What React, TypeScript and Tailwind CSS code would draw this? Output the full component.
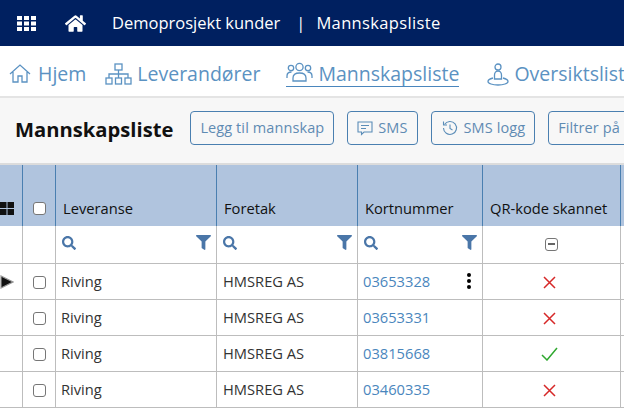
import { FaFilter, FaHome, FaSearch } from 'react-icons/fa';

const font = "font-['Open_Sans','Noto_Sans',sans-serif]";
const cols = 'grid grid-cols-[23px_33px_161px_141px_125px_138px_40px]';
const line = 'border-r border-b border-[#bdbdbd]';

const rows = [
  { no: '03653328', ok: false, active: true },
  { no: '03653331', ok: false },
  { no: '03815668', ok: true },
  { no: '03460335', ok: false },
];

function GridIcon() {
  return (
    <svg width="19" height="15" viewBox="0 0 19 15" fill="#fff">
      {[0, 7, 14].map(x => [0, 5.5, 11].map(y => <rect key={`${x}-${y}`} x={x} y={y} width="5" height="4" />))}
    </svg>
  );
}

function HomeOutline() {
  return (
    <svg width="22" height="22" viewBox="0 0 22 22" fill="none" stroke="#5b92c2" strokeWidth="1.3">
      <path d="M1 11 11 2l10 9M4 9v10h5v-6h4v6h5V9" />
    </svg>
  );
}

function OrgIcon() {
  return (
    <svg width="27" height="22" viewBox="0 0 27 22" fill="none" stroke="#5b92c2" strokeWidth="1.3">
      <rect x="10" y="1" width="7" height="6" />
      <rect x="1" y="15" width="6" height="6" />
      <rect x="10.5" y="15" width="6" height="6" />
      <rect x="20" y="15" width="6" height="6" />
      <path d="M13.5 7v8M4 15v-4h19v4" />
    </svg>
  );
}

function PeopleIcon() {
  return (
    <svg width="27" height="22" viewBox="0 0 27 22" fill="none" stroke="#5b92c2" strokeWidth="1.3">
      <circle cx="13.5" cy="5" r="3.6" />
      <circle cx="5" cy="6" r="2.7" />
      <circle cx="22" cy="6" r="2.7" />
      <path d="M7 19v-3c0-3 2.5-5 6.5-5s6.5 2 6.5 5v3zM1 16v-2c0-2 1.500-4 4.500-4M26 16v-2c0-2-1.500-4-4.500-4" />
    </svg>
  );
}

function PinPersonIcon() {
  return (
    <svg width="22" height="24" viewBox="0 0 22 24" fill="none" stroke="#5b92c2" strokeWidth="1.3">
      <circle cx="11" cy="5" r="3" />
      <path d="M7.500 17v-4c0-2 1.500-4 3.500-4s3.500 2 3.500 4v4z" />
      <path d="M6 16c-3 .8-5 2-5 3.500C1 21.500 5.500 23 11 23s10-1.500 10-3.500c0-1.500-2-2.700-5-3.500" />
    </svg>
  );
}

function SmsIcon() {
  return (
    <svg width="16" height="16" viewBox="0 0 16 16" fill="none" stroke="#5b8db8" strokeWidth="1.1">
      <path d="M1 2h14v10H7l-2.500 2.500V12H1z" />
      <path d="M4 5.500h8M4 8.500h5" />
    </svg>
  );
}

function HistoryIcon() {
  return (
    <svg width="18" height="16" viewBox="0 0 18 16" fill="none" stroke="#5b8db8" strokeWidth="1.1">
      <path d="M3.500 4.500A6.500 6.500 0 1 1 2.500 8" />
      <path d="M2.500 1.500v3.500H6M9 4.500V8.500l2.500 1.500" />
    </svg>
  );
}

function Tool({ children }: { children: React.ReactNode }) {
  return (
    <button className="h-[34px] shrink-0 flex items-center gap-[5px] px-[9px] rounded-[4px] border border-[#4a7fb0] text-[14.5px] tracking-[0.1px] text-[#5f8bb3] whitespace-nowrap">
      {children}
    </button>
  );
}

function NavItem({ icon, label, active, className }: { icon: React.ReactNode; label: string; active?: boolean; className?: string }) {
  return (
    <div className={`shrink-0 h-[27px] flex items-center ${active ? 'border-b border-[#4a86bd]' : ''} ${className ?? ''}`}>
      {icon}
      <span className="text-[19.5px] leading-none text-[#5b92c2] whitespace-nowrap pt-[1px]">{label}</span>
    </div>
  );
}

function HeadCell({ label }: { label?: string }) {
  return (
    <div className="h-[61px] border-r border-[#4a7fb0] flex items-end pb-[8px] pl-[7px] text-[14.7px] leading-[20px] text-[#111] whitespace-nowrap overflow-hidden">
      {label}
    </div>
  );
}

function FilterCell() {
  return (
    <div className={`h-[38px] ${line} flex items-center justify-between pl-[6px] pr-[5px] pb-[4px]`}>
      <FaSearch size={14} color="#4a76a8" />
      <FaFilter size={15} color="#4a76a8" />
    </div>
  );
}

function Box({ minus }: { minus?: boolean }) {
  return (
    <span className="w-[13px] h-[13px] rounded-[3px] border border-[#767676] bg-white flex items-center justify-center">
      {minus && <span className="w-[7px] h-[2px] bg-[#666]" />}
    </span>
  );
}

export default function App() {
  return (
    <div className={`w-[624px] h-[409px] overflow-hidden bg-white ${font}`}>
      {/* Top bar */}
      <div className="h-[46px] bg-[#002060] flex items-center pl-[17px] text-white text-[16.5px] whitespace-nowrap">
        <GridIcon />
        <FaHome size={21} color="#fff" className="ml-[29px]" />
        <span className="ml-[26px]">Demoprosjekt kunder</span>
        <span className="ml-[16px]">|</span>
        <span className="ml-[11px] tracking-[0.35px]">Mannskapsliste</span>
      </div>

      {/* Nav */}
      <div className="h-[52px] flex items-start pt-[14px] pl-[9px] border-b-2 border-[#e4e4e4] overflow-hidden">
        <NavItem icon={<HomeOutline />} label="Hjem" className="gap-[7px]" />
        <NavItem icon={<OrgIcon />} label="Leverandører" className="ml-[19px] gap-[5px]" />
        <NavItem icon={<PeopleIcon />} label="Mannskapsliste" active className="ml-[26px] gap-[5px]" />
        <NavItem icon={<PinPersonIcon />} label="Oversiktsliste" className="ml-[28px] gap-[5px]" />
      </div>

      {/* Toolbar */}
      <div className="h-[67px] bg-[#f7f7f7] border-b-2 border-[#dcdcdc] flex items-center pl-[15px] overflow-hidden">
        <h1 className="text-[20.2px] font-bold text-[#111] mr-[17px] mb-[2px] whitespace-nowrap">Mannskapsliste</h1>
        <div className="flex gap-[13px] mb-[5px]">
          <Tool>Legg til mannskap</Tool>
          <Tool><SmsIcon />SMS</Tool>
          <Tool><HistoryIcon />SMS logg</Tool>
          <Tool>Filtrer på mannskap</Tool>
        </div>
      </div>

      {/* Table */}
      <div className="overflow-hidden">
        <div className={`${cols} bg-[#b0c4de]`}>
          <div className="h-[61px] border-r border-[#4a7fb0] relative overflow-hidden">
            <svg className="absolute left-0 top-[37px]" width="15" height="13" viewBox="0 0 15 13" fill="#111">
              <rect x="0" y="0" width="6.500" height="6" />
              <rect x="7.500" y="0" width="6.500" height="6" />
              <rect x="0" y="7" width="6.500" height="6" />
              <rect x="7.500" y="7" width="6.500" height="6" />
            </svg>
          </div>
          <div className="h-[61px] border-r border-[#4a7fb0] flex justify-center pt-[37px]">
            <Box />
          </div>
          <HeadCell label="Leveranse" />
          <HeadCell label="Foretak" />
          <HeadCell label="Kortnummer" />
          <HeadCell label="QR-kode skannet" />
          <HeadCell />
        </div>

        <div className={cols}>
          <div className={`h-[38px] ${line}`} />
          <div className={`h-[38px] ${line}`} />
          <FilterCell />
          <FilterCell />
          <FilterCell />
          <div className={`h-[38px] ${line} flex justify-center items-center pb-[1px]`}>
            <Box minus />
          </div>
          <div className={`h-[38px] ${line}`} />
        </div>

        {rows.map(r => (
          <div key={r.no} className={`${cols} text-[14.7px] text-[#333]`}>
            <div className={`h-[36px] ${line} flex items-center`}>
              {r.active && (
                <svg width="14" height="14" viewBox="0 0 14 14">
                  <path d="M1 1v12l12-6z" fill="#111" stroke="#999" strokeWidth="1.200" />
                </svg>
              )}
            </div>
            <div className={`h-[36px] ${line} flex justify-center items-center pt-[1px]`}>
              <Box />
            </div>
            <div className={`h-[36px] ${line} flex items-center pl-[5px]`}>Riving</div>
            <div className={`h-[36px] ${line} flex items-center pl-[6px]`}>HMSREG AS</div>
            <div className={`h-[36px] ${line} flex items-center justify-between pl-[5px] pr-[11px] text-[#4a86bd]`}>
              {r.no}
              {r.active && (
                <span className="flex flex-col gap-[2px] mb-[2px]">
                  <span className="w-[4px] h-[4px] rounded-full bg-black" />
                  <span className="w-[4px] h-[4px] rounded-full bg-black" />
                  <span className="w-[4px] h-[4px] rounded-full bg-black" />
                </span>
              )}
            </div>
            <div className={`h-[36px] ${line} flex justify-center items-center pr-[5px] ${r.ok ? '' : 'pt-[2px]'}`}>
              {r.ok ? (
                <svg width="17" height="14" viewBox="0 0 17 14" fill="none" stroke="#2fa82f" strokeWidth="1.500">
                  <path d="M1 8l5 5L16 1" />
                </svg>
              ) : (
                <svg width="13" height="13" viewBox="0 0 13 13" fill="none" stroke="#d62828" strokeWidth="1.500">
                  <path d="M1 1l11 11M12 1 1 12" />
                </svg>
              )}
            </div>
            <div className={`h-[36px] ${line}`} />
          </div>
        ))}
      </div>
    </div>
  );
}
